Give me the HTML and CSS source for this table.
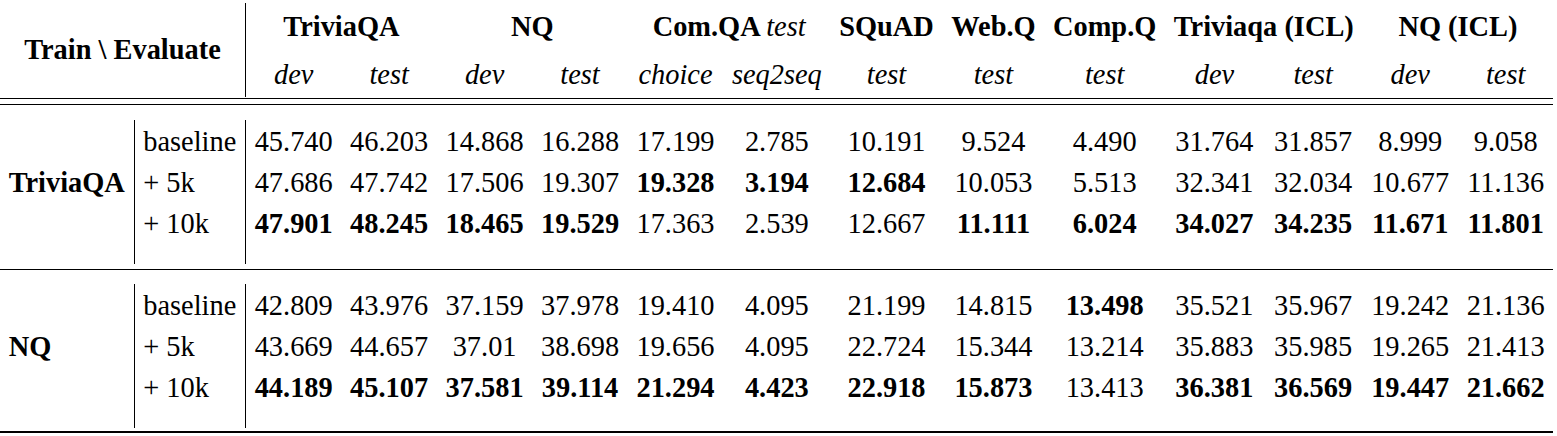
FILE: index.html
```html
<!DOCTYPE html>
<html lang="en">
<head>
<meta charset="utf-8">
<title>Results table</title>
<link rel="stylesheet" href="styles.css">
</head>
<body>
<table class="results">
  <thead>
    <tr class="h1">
      <th class="corner" rowspan="2" colspan="2">Train \ Evaluate</th>
      <th colspan="2">TriviaQA</th>
      <th colspan="2">NQ</th>
      <th colspan="2">Com.QA <i class="it">test</i></th>
      <th>SQuAD</th>
      <th>Web.Q</th>
      <th>Comp.Q</th>
      <th colspan="2">Triviaqa (ICL)</th>
      <th colspan="2">NQ (ICL)</th>
    </tr>
    <tr class="h2">
      <td>dev</td><td>test</td><td>dev</td><td>test</td><td>choice</td><td>seq2seq</td><td>test</td><td>test</td><td>test</td><td>dev</td><td>test</td><td>dev</td><td>test</td>
    </tr>
  </thead>
  <tbody>
    <tr class="rule"><td colspan="15"><div class="double"></div></td></tr>
    <tr class="gap top"><td colspan="15"></td></tr>
    <tr class="first">
      <td class="grp"></td><td class="set">baseline</td>
      <td class="n">45.740</td><td class="n">46.203</td><td class="n">14.868</td><td class="n">16.288</td><td class="n">17.199</td><td class="n">2.785</td><td class="n">10.191</td><td class="n">9.524</td><td class="n">4.490</td><td class="n">31.764</td><td class="n">31.857</td><td class="n">8.999</td><td class="n">9.058</td>
    </tr>
    <tr>
      <td class="grp">TriviaQA</td><td class="set">+ 5k</td>
      <td class="n">47.686</td><td class="n">47.742</td><td class="n">17.506</td><td class="n">19.307</td><td class="n b">19.328</td><td class="n b">3.194</td><td class="n b">12.684</td><td class="n">10.053</td><td class="n">5.513</td><td class="n">32.341</td><td class="n">32.034</td><td class="n">10.677</td><td class="n">11.136</td>
    </tr>
    <tr class="last">
      <td class="grp"></td><td class="set">+ 10k</td>
      <td class="n b">47.901</td><td class="n b">48.245</td><td class="n b">18.465</td><td class="n b">19.529</td><td class="n">17.363</td><td class="n">2.539</td><td class="n">12.667</td><td class="n b">11.111</td><td class="n b">6.024</td><td class="n b">34.027</td><td class="n b">34.235</td><td class="n b">11.671</td><td class="n b">11.801</td>
    </tr>
    <tr class="gap bottom"><td colspan="15"></td></tr>
    <tr class="rule"><td colspan="15"><div class="mid"></div></td></tr>
    <tr class="gap top2"><td colspan="15"></td></tr>
    <tr class="first">
      <td class="grp"></td><td class="set">baseline</td>
      <td class="n">42.809</td><td class="n">43.976</td><td class="n">37.159</td><td class="n">37.978</td><td class="n">19.410</td><td class="n">4.095</td><td class="n">21.199</td><td class="n">14.815</td><td class="n b">13.498</td><td class="n">35.521</td><td class="n">35.967</td><td class="n">19.242</td><td class="n">21.136</td>
    </tr>
    <tr>
      <td class="grp">NQ</td><td class="set">+ 5k</td>
      <td class="n">43.669</td><td class="n">44.657</td><td class="n">37.01</td><td class="n">38.698</td><td class="n">19.656</td><td class="n">4.095</td><td class="n">22.724</td><td class="n">15.344</td><td class="n">13.214</td><td class="n">35.883</td><td class="n">35.985</td><td class="n">19.265</td><td class="n">21.413</td>
    </tr>
    <tr class="last">
      <td class="grp"></td><td class="set">+ 10k</td>
      <td class="n b">44.189</td><td class="n b">45.107</td><td class="n b">37.581</td><td class="n b">39.114</td><td class="n b">21.294</td><td class="n b">4.423</td><td class="n b">22.918</td><td class="n b">15.873</td><td class="n">13.413</td><td class="n b">36.381</td><td class="n b">36.569</td><td class="n b">19.447</td><td class="n b">21.662</td>
    </tr>
    <tr class="gap bottom2"><td colspan="15"></td></tr>
    <tr class="rule"><td colspan="15"><div class="bot"></div></td></tr>
  </tbody>
</table>
</body>
</html>
```

FILE: styles.css
```css
html, body {
  margin: 0;
  padding: 0;
  background: #fff;
}

body {
  font-family: "Liberation Serif", serif;
  font-size: 28.4px;
  color: #000;
}

.results {
  margin-top: 3px;
  border-collapse: collapse;
  border-spacing: 0;
  font-family: "Liberation Serif", serif;
  font-size: 28.4px;
  line-height: 41px;
  color: #000;
}

.results th,
.results td {
  padding: 0 8.7px;
  vertical-align: top;
  text-align: center;
  white-space: nowrap;
}

.results th {
  font-weight: bold;
}

.results .it {
  font-weight: normal;
  font-style: italic;
}

.results .h1 th {
  padding-top: 3px;
}

.results .h1 th.corner {
  padding-top: 26px;
  border-right: 1px solid #000;
}

.results .h2 td {
  font-style: italic;
  padding-top: 7px;
  padding-bottom: 2px;
}

.results .rule td {
  padding: 0;
  line-height: 0;
  font-size: 0;
}

.double {
  margin-top: 1px;
  height: 5.4px;
  border-top: 1.3px solid #000;
  border-bottom: 1.3px solid #000;
}

.mid {
  border-top: 1.4px solid #000;
}

.bot {
  border-top: 2px solid #000;
}

.results .gap td {
  padding: 0;
  line-height: 0;
  font-size: 0;
}

.results .gap.top td { height: 15px; }
.results .gap.bottom td { height: 5px; }
.results .gap.top2 td { height: 13.5px; }
.results .gap.bottom2 td { height: 3px; }

.results td.grp {
  text-align: left;
  font-weight: bold;
  border-right: 1px solid #000;
}

.results td.set {
  text-align: left;
  border-right: 1px solid #000;
}

.results td.b {
  font-weight: bold;
}

.results tr.first td {
  padding-top: 1px;
}

.results tr.last td {
  padding-bottom: 20px;
}
```
